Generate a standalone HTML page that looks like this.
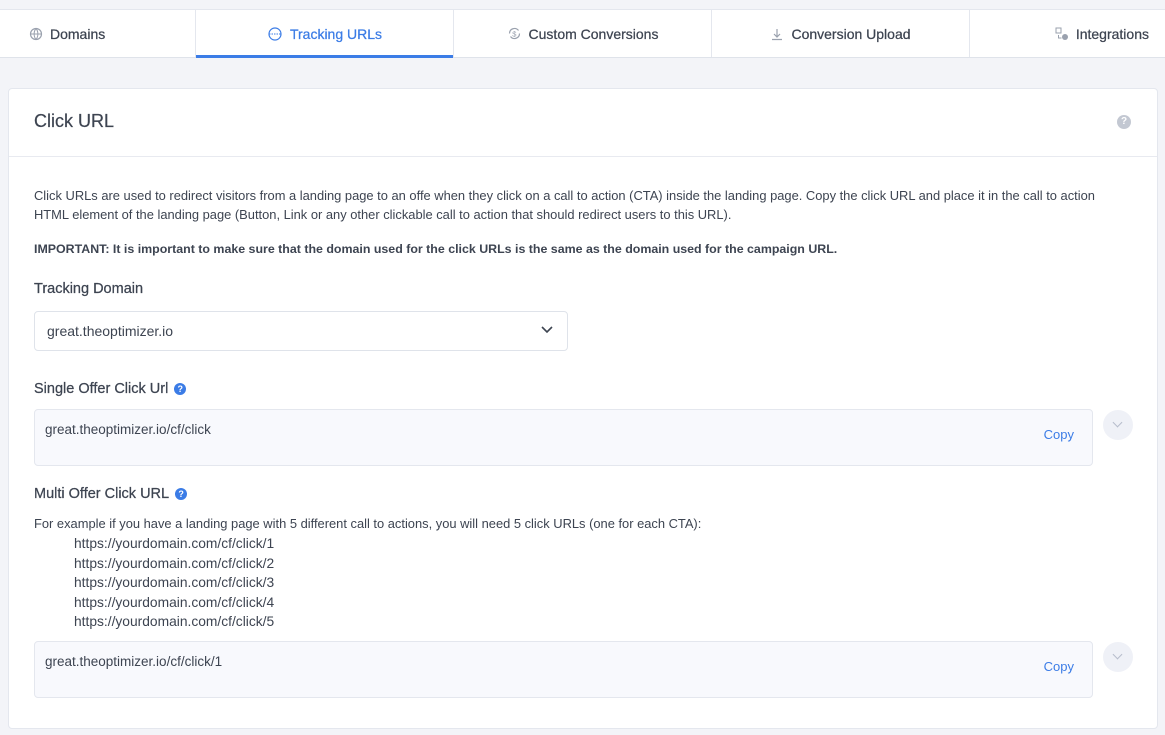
<!DOCTYPE html>
<html><head><style>
*{box-sizing:border-box;margin:0;padding:0}
body{width:1165px;height:735px;background:#f3f4f8;font-family:"Liberation Sans",sans-serif;color:#3d4451;position:relative;overflow:hidden}
.tabs{position:absolute;top:9px;left:0;width:1165px;height:49px;background:#fff;border-top:1px solid #e4e7ee;border-bottom:1px solid #dfe3ea;display:flex}
.tab{height:47px;display:flex;align-items:center;justify-content:center;font-size:14px;color:#3d4451;border-right:1px solid #e4e7ee;position:relative;-webkit-text-stroke:0.25px}
.tab svg{margin-right:7px}
.tab.act{color:#3b7ce6}
.tab.act:after{content:"";position:absolute;left:0;right:0;bottom:-1px;height:3px;background:#3b7ce6}
.card{position:absolute;left:8px;top:88px;width:1150px;height:641px;background:#fff;border:1px solid #e4e7ee;border-radius:4px}
.hd{height:68px;border-bottom:1px solid #e8eaf0;padding:22px 25px;font-size:18px;color:#3d4451;-webkit-text-stroke:0.2px}
.q{position:absolute;right:26px;top:26px;width:14px;height:14px;border-radius:50%;background:#c3c8d2;color:#fff;font-size:10px;font-weight:bold;text-align:center;line-height:14px}
.p{position:absolute;left:25px;font-size:12.9px;line-height:19px;color:#3d4451}
.lbl{position:absolute;left:25px;font-size:14.5px;color:#3d4451;-webkit-text-stroke:0.25px}
.qi{display:inline-block;width:12px;height:12px;border-radius:50%;background:#3b7ce6;color:#fff;font-size:9px;font-weight:bold;text-align:center;line-height:12px;margin-left:6px;vertical-align:1px;-webkit-text-stroke:0}
.sel{position:absolute;left:25px;top:222px;width:534px;height:40px;border:1px solid #dfe3ea;border-radius:4px;padding:11px 12px;font-size:14px}
.box{position:absolute;left:25px;width:1059px;height:57px;background:#f8f9fd;border:1px solid #e4e7ee;border-radius:4px;padding:12px 10px;font-size:13.5px}
.copy{position:absolute;right:18px;top:17px;color:#3b7ce6;font-size:13px}
.circ{position:absolute;left:1094px;width:30px;height:30px;border-radius:50%;background:#eff1f7}
.circ:after{content:"";position:absolute;left:11px;top:9px;width:6px;height:6px;border-right:1.5px solid #b7bdcc;border-bottom:1.5px solid #b7bdcc;transform:rotate(45deg)}
</style></head><body>
<div class="tabs">
<div class="tab" style="width:196px;justify-content:flex-start;padding-left:29px"><svg width="14" height="14" viewBox="0 0 14 14"><circle cx="7" cy="7" r="5.5" fill="none" stroke="#9aa1ae" stroke-width="1.2"/><path d="M1.5 7h11M7 1.5c-2.5 3-2.5 8 0 11M7 1.5c2.5 3 2.5 8 0 11" fill="none" stroke="#9aa1ae"/></svg>Domains</div>
<div class="tab act" style="width:258px"><svg width="16" height="14" viewBox="0 0 16 14"><circle cx="8" cy="7" r="6" fill="none" stroke="#3b7ce6" stroke-width="1.2"/><path d="M2 7h12" stroke="#3b7ce6" stroke-dasharray="1.5 1"/></svg>Tracking URLs</div>
<div class="tab" style="width:258px"><svg width="15" height="15" viewBox="0 0 15 15"><path d="M2.5 7.5a5 5 0 0 1 9-3M12.5 7.5a5 5 0 0 1-9 3" fill="none" stroke="#9aa1ae" stroke-width="1.2"/><text x="5.3" y="10.5" font-size="7.5" fill="#9aa1ae" font-family="Liberation Sans">$</text></svg>Custom Conversions</div>
<div class="tab" style="width:258px"><svg width="14" height="14" viewBox="0 0 14 14"><path d="M7 2v8M4 7l3 3 3-3M2 12.5h10" fill="none" stroke="#9aa1ae" stroke-width="1.2"/></svg>Conversion Upload</div>
<div class="tab" style="width:195px;border-right:0;justify-content:flex-end;padding-right:16px"><svg width="14" height="14" viewBox="0 0 14 14"><rect x="1" y="1" width="5" height="5" fill="none" stroke="#9aa1ae"/><circle cx="10" cy="10" r="3" fill="#9aa1ae"/><path d="M3.5 8v3h3" fill="none" stroke="#9aa1ae"/></svg>Integrations</div>
</div>
<div class="card">
<div class="hd">Click URL</div><div class="q">?</div>
<div class="p" style="top:97px">Click URLs are used to redirect visitors from a landing page to an offe when they click on a call to action (CTA) inside the landing page. Copy the click URL and place it in the call to action<br>HTML element of the landing page (Button, Link or any other clickable call to action that should redirect users to this URL).</div>
<div class="p" style="top:151px;font-weight:bold;font-size:12.4px">IMPORTANT: It is important to make sure that the domain used for the click URLs is the same as the domain used for the campaign URL.</div>
<div class="lbl" style="top:192px">Tracking Domain</div>
<div class="sel">great.theoptimizer.io<svg style="position:absolute;right:14px;top:14px" width="12" height="8" viewBox="0 0 12 8"><path d="M1 1l5 5 5-5" fill="none" stroke="#3d4451" stroke-width="1.6"/></svg></div>
<div class="lbl" style="top:292px">Single Offer Click Url<span class="qi">?</span></div>
<div class="box" style="top:320px">great.theoptimizer.io/cf/click<span class="copy">Copy</span></div>
<div class="circ" style="top:321px"></div>
<div class="lbl" style="top:397px">Multi Offer Click URL<span class="qi">?</span></div>
<div class="p" style="top:425px;font-size:12.9px">For example if you have a landing page with 5 different call to actions, you will need 5 click URLs (one for each CTA):</div>
<div class="p" style="top:445px;left:65px;line-height:19.5px;font-size:13.8px">https://yourdomain.com/cf/click/1<br>https://yourdomain.com/cf/click/2<br>https://yourdomain.com/cf/click/3<br>https://yourdomain.com/cf/click/4<br>https://yourdomain.com/cf/click/5</div>
<div class="box" style="top:552px">great.theoptimizer.io/cf/click/1<span class="copy">Copy</span></div>
<div class="circ" style="top:553px"></div>
</div>
</body></html>
